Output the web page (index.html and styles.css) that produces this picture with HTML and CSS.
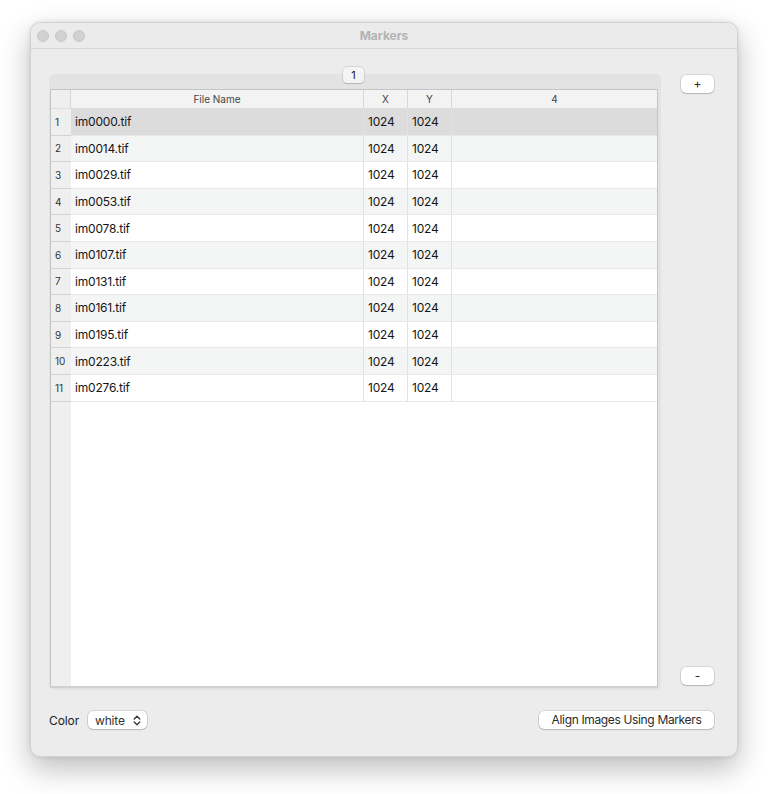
FILE: index.html
```html
<!DOCTYPE html>
<html>
<head>
<meta charset="utf-8">
<title>Markers</title>
<link rel="stylesheet" href="styles.css">
</head>
<body>
<div class="window">
  <div class="titlebar">
    <div class="lights"><span class="light"></span><span class="light"></span><span class="light"></span></div>
    <div class="title">Markers</div>
  </div>
  <div class="content">
    <div class="main">
      <div class="tabwidget">
        <div class="tab">1</div>
        <div class="tabbox">
          <div class="table">
            <div class="row head">
              <div class="num"></div>
              <div class="cell c-name">File Name</div>
              <div class="cell c-x">X</div>
              <div class="cell c-y">Y</div>
              <div class="cell c-4">4</div>
            </div>
            <div class="row sel"><div class="num">1</div><div class="cell c-name">im0000.tif</div><div class="cell c-x">1024</div><div class="cell c-y">1024</div><div class="cell c-4"></div></div>
            <div class="row alt"><div class="num">2</div><div class="cell c-name">im0014.tif</div><div class="cell c-x">1024</div><div class="cell c-y">1024</div><div class="cell c-4"></div></div>
            <div class="row"><div class="num">3</div><div class="cell c-name">im0029.tif</div><div class="cell c-x">1024</div><div class="cell c-y">1024</div><div class="cell c-4"></div></div>
            <div class="row alt"><div class="num">4</div><div class="cell c-name">im0053.tif</div><div class="cell c-x">1024</div><div class="cell c-y">1024</div><div class="cell c-4"></div></div>
            <div class="row"><div class="num">5</div><div class="cell c-name">im0078.tif</div><div class="cell c-x">1024</div><div class="cell c-y">1024</div><div class="cell c-4"></div></div>
            <div class="row alt"><div class="num">6</div><div class="cell c-name">im0107.tif</div><div class="cell c-x">1024</div><div class="cell c-y">1024</div><div class="cell c-4"></div></div>
            <div class="row"><div class="num">7</div><div class="cell c-name">im0131.tif</div><div class="cell c-x">1024</div><div class="cell c-y">1024</div><div class="cell c-4"></div></div>
            <div class="row alt"><div class="num">8</div><div class="cell c-name">im0161.tif</div><div class="cell c-x">1024</div><div class="cell c-y">1024</div><div class="cell c-4"></div></div>
            <div class="row"><div class="num">9</div><div class="cell c-name">im0195.tif</div><div class="cell c-x">1024</div><div class="cell c-y">1024</div><div class="cell c-4"></div></div>
            <div class="row alt"><div class="num">10</div><div class="cell c-name">im0223.tif</div><div class="cell c-x">1024</div><div class="cell c-y">1024</div><div class="cell c-4"></div></div>
            <div class="row"><div class="num">11</div><div class="cell c-name">im0276.tif</div><div class="cell c-x">1024</div><div class="cell c-y">1024</div><div class="cell c-4"></div></div>
            <div class="filler"><div class="num"></div><div class="blank"></div></div>
          </div>
        </div>
      </div>
      <div class="side">
        <button class="btn small">+</button>
        <button class="btn small">-</button>
      </div>
    </div>
    <div class="bottom">
      <div class="colorgroup">
        <span class="label">Color</span>
        <div class="popup">
          <span>white</span>
          <svg width="8" height="11" viewBox="0 0 8 11"><path d="M1.2 4 L4 1.3 L6.8 4 M1.2 7 L4 9.7 L6.8 7" fill="none" stroke="#333" stroke-width="1.3" stroke-linecap="round" stroke-linejoin="round"/></svg>
        </div>
      </div>
      <button class="btn wide">Align Images Using Markers</button>
    </div>
  </div>
</div>
</body>
</html>
```
FILE: styles.css
```css
* { box-sizing: border-box; }
html, body { margin: 0; padding: 0; background: #ffffff; }
body {
  font-family: Inter, "Liberation Sans", "DejaVu Sans", sans-serif;
  color: #222;
  min-height: 794px;
  padding-top: 22px;
}
.window {
  margin: 0 0 0 30px;
  width: 708px;
  height: 735px;
  background: #ececec;
  border-radius: 10px;
  border: 1px solid #d2d2d2;
  box-shadow: 0 12px 30px rgba(0,0,0,0.26), 0 0 5px rgba(0,0,0,0.1);
  display: flex;
  flex-direction: column;
  overflow: hidden;
}
.titlebar {
  height: 26px;
  flex: none;
  display: flex;
  align-items: center;
  border-bottom: 1px solid #d8d8d8;
  background: #ebebeb;
  padding-left: 6px;
}
.lights { display: flex; gap: 6px; width: 300px; }
.light {
  width: 12px; height: 12px; border-radius: 50%;
  background: #d1d1d1; border: 1px solid #c6c6c6;
}
.title {
  position: absolute;
  left: 30px; width: 708px;
  text-align: center;
  font-size: 12px; font-weight: 700; color: #b3b3b3;
  pointer-events: none;
}
.content {
  flex: 1;
  display: flex;
  flex-direction: column;
  padding: 18px 23px 26px 17px;
}
.main { flex: 1; display: flex; gap: 20px; min-height: 0; padding-left: 1px; }
.tabwidget { width: 612px; display: flex; flex-direction: column; align-items: center; }
.tab {
  position: relative; z-index: 1;
  height: 16px; min-width: 21px;
  padding: 0 7px;
  margin-bottom: -9px;
  margin-right: 3px;
  background: #f4f4f4;
  border-radius: 4px;
  box-shadow: 0 0 0 0.5px rgba(0,0,0,0.18), 0 1px 1px rgba(0,0,0,0.12);
  font-size: 11px; line-height: 16px; color: #222; text-align: center;
}
.tabbox {
  flex: 1; align-self: stretch;
  background: #e3e3e3;
  border-radius: 5px;
  padding: 15px 3px 2px 1px;
  display: flex;
}
.table {
  flex: 1;
  display: flex; flex-direction: column;
  background: #fff;
  border: 1px solid #c4c4c4;
  border-bottom: 2px solid #d0d0d0;
}
.row { display: flex; height: 26.6px; border-bottom: 1px solid #e8e8e8; flex: none; }
.row.head { height: 19px; background: #f3f3f3; border-bottom: 1px solid #dcdcdc; }
.row.alt .cell { background: #f4f5f5; }
.row.sel .cell { background: #dcdcdc; }
.num {
  width: 20px; flex: none;
  background: #efefef;
  font-size: 10px; color: #333;
  display: flex; align-items: center; padding-left: 4px;
  border-bottom: 1px solid #d2d2d2;
  margin-bottom: -1px;
}
.head .num { border-right: 1px solid #d6d6d6; border-bottom: none; margin-bottom: 0; }
.cell {
  display: flex; align-items: center;
  font-size: 12px; letter-spacing: -0.2px; color: #161616;
  padding-left: 4px;
  background: #fff;
}
.c-name { width: 292px; }
.c-x { width: 44px; border-left: 1px solid #e2e2e2; }
.c-y { width: 44px; border-left: 1px solid #e2e2e2; }
.c-4 { flex: 1; border-left: 1px solid #e2e2e2; }
.head .cell {
  justify-content: center; padding-left: 0; letter-spacing: 0;
  font-size: 10px; color: #444; background: #f3f3f3;
}
.head .c-x, .head .c-y, .head .c-4 { border-left: 1px solid #d6d6d6; }
.filler { flex: 1; display: flex; }
.filler .num { border-bottom: none; margin-bottom: 0; }
.blank { flex: 1; background: #fff; }
.side {
  width: 33px;
  display: flex; flex-direction: column; justify-content: space-between;
  padding: 8px 0 5px;
}
.btn {
  font-family: inherit;
  background: #fff;
  border: none;
  border-radius: 5px;
  box-shadow: 0 0 0 0.5px rgba(0,0,0,0.2), 0 1px 1.5px rgba(0,0,0,0.14);
  color: #2a2a2a;
  padding: 0;
}
.btn.small { width: 33px; height: 18px; font-size: 12px; line-height: 18px; }
.bottom {
  flex: none;
  display: flex; align-items: center; justify-content: space-between;
  margin-top: 20px;
  height: 20px;
}
.colorgroup { display: flex; align-items: center; gap: 9px; padding-left: 1px; }
.label { font-size: 12px; color: #222; letter-spacing: -0.1px; }
.popup {
  width: 59px; height: 18px;
  background: #fff; border-radius: 5px;
  box-shadow: 0 0 0 0.5px rgba(0,0,0,0.2), 0 1px 1.5px rgba(0,0,0,0.14);
  display: flex; align-items: center; justify-content: space-between;
  padding: 0 6px 0 7px;
  font-size: 12px; letter-spacing: -0.2px; color: #333;
}
.btn.wide { width: 175px; height: 18px; font-size: 12px; letter-spacing: -0.35px; line-height: 18px; color: #2a2a2a; }
```
